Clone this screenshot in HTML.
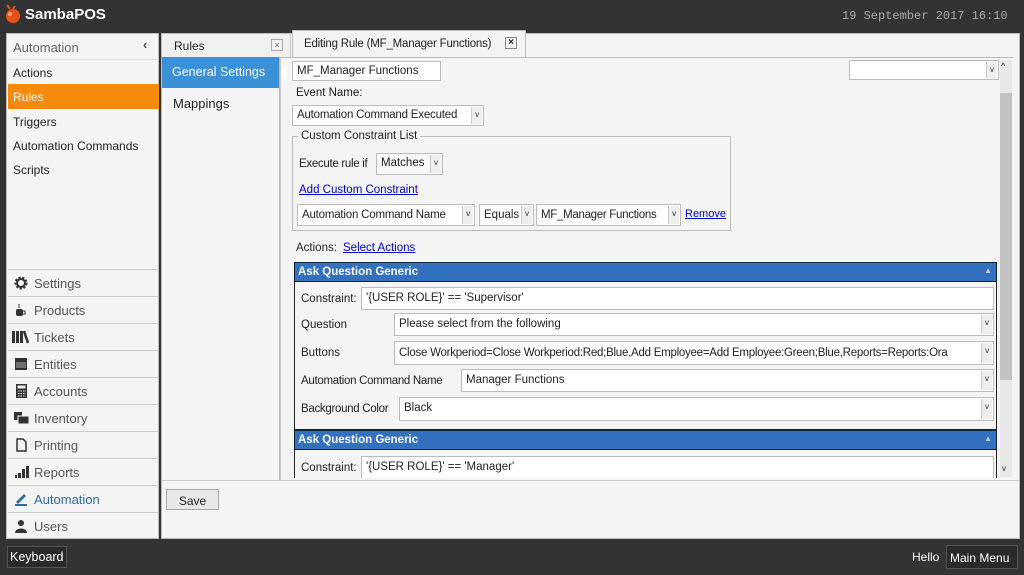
<!DOCTYPE html>
<html><head><style>
*{box-sizing:border-box;margin:0;padding:0}
body{width:1024px;height:575px;background:#333;font-family:"Liberation Sans",sans-serif;font-size:12px;color:#222;position:relative;overflow:hidden}
.a{position:absolute;white-space:nowrap}
.lp{left:6px;top:33px;width:153px;height:506px;background:#f4f4f4;border:1px solid #bbb}
.li{position:absolute;left:6px;font-size:12px;color:#222}
.bi{position:absolute;left:1px;width:151px;height:27px;border-top:1px solid #ccc;font-size:13px;color:#555;padding:6px 0 0 26px}
.bi svg{position:absolute;left:6px;top:6px}
.mid{left:161px;top:33px;width:859px;height:506px;background:#f4f4f4;border:1px solid #bbb}
.inp{position:absolute;background:#fff;border:1px solid #bbb;font-size:11.5px;padding:3px 4px;white-space:nowrap;overflow:hidden}
.dd{position:absolute;right:1px;top:1px;bottom:1px;width:11px;background:#eee;border-left:1px solid #ccc;font-size:8px;text-align:center;line-height:16px;color:#333}
.lk{color:#00c;text-decoration:underline;position:absolute;white-space:nowrap;font-size:11.5px}
.hdr{position:absolute;left:294px;width:703px;height:20px;background:#3470c0;border:1px solid #123;color:#fff;font-weight:bold;font-size:11.5px;padding:3px 3px}
.lbl{position:absolute;font-size:11.5px;white-space:nowrap}
</style></head><body>
<svg class="a" style="left:4px;top:4px" width="18" height="20"><circle cx="9" cy="12" r="7" fill="#e8501a"/><path d="M6 5 L3 1 M9 5 L11 2" stroke="#e8501a" stroke-width="2"/><circle cx="6" cy="10" r="2" fill="#f8a070"/></svg>
<div class="a" style="left:25px;top:6px;color:#fff;font-weight:bold;font-size:15px">SambaPOS</div>
<div class="a" style="left:842px;top:9px;color:#aaa;font-family:'Liberation Mono',monospace;font-size:12px">19 September 2017 16:10</div>
<div class="a lp">
<div class="li" style="top:6px;font-size:13px;color:#666">Automation</div>
<div class="a" style="left:136px;top:3px;font-size:13px;font-weight:bold;color:#444">‹</div>
<div class="a" style="left:1px;top:25px;width:151px;border-top:1px solid #ddd"></div>
<div class="li" style="top:32px">Actions</div>
<div class="a" style="left:1px;top:50px;width:151px;height:25px;background:#f58a0c;color:#fff;padding:6px 5px">Rules</div>
<div class="li" style="top:81px">Triggers</div>
<div class="li" style="top:105px">Automation Commands</div>
<div class="li" style="top:129px">Scripts</div>
<div class="bi" style="top:235px"><svg width="14" height="14"><circle cx="7" cy="7" r="5" fill="none" stroke="#333" stroke-width="3" stroke-dasharray="2 1.5"/><circle cx="7" cy="7" r="4" fill="none" stroke="#333" stroke-width="2"/></svg>Settings</div>
<div class="bi" style="top:262px"><svg width="14" height="14"><rect x="2" y="6" width="7" height="7" rx="2" fill="#333"/><path d="M9 8h2v3H9" stroke="#333" fill="none"/><path d="M5 1v4" stroke="#333"/></svg>Products</div>
<div class="bi" style="top:289px"><svg width="18" height="14" style="left:3px"><rect x="1" y="1" width="3" height="12" fill="#333"/><rect x="5" y="1" width="3" height="12" fill="#333"/><rect x="9" y="1" width="3" height="12" fill="#333"/><path d="M13 1l4 12" stroke="#333" stroke-width="2.5"/></svg>Tickets</div>
<div class="bi" style="top:316px"><svg width="14" height="14"><rect x="1" y="1" width="12" height="12" fill="#333"/><rect x="2.5" y="5" width="9" height="6" fill="#aaa"/><path d="M4 5v6M6 5v6M8 5v6M10 5v6" stroke="#333"/></svg>Entities</div>
<div class="bi" style="top:343px"><svg width="14" height="14"><rect x="2" y="0" width="11" height="14" fill="#333"/><rect x="3.5" y="1.5" width="8" height="3" fill="#eee"/><path d="M4 7h8M4 9.5h8M4 12h8" stroke="#eee" stroke-dasharray="1.5 1"/></svg>Accounts</div>
<div class="bi" style="top:370px"><svg width="16" height="14"><rect x="0" y="1" width="8" height="8" fill="#333"/><rect x="4" y="5" width="11" height="8" fill="#333" stroke="#f4f4f4"/></svg>Inventory</div>
<div class="bi" style="top:397px"><svg width="14" height="14"><path d="M3 1h6l3 3v9H3z" fill="none" stroke="#333" stroke-width="1.5"/></svg>Printing</div>
<div class="bi" style="top:424px"><svg width="16" height="14"><rect x="1" y="10" width="2" height="3" fill="#333"/><rect x="4" y="8" width="3" height="5" fill="#333"/><rect x="8" y="4" width="3" height="9" fill="#333"/><rect x="12" y="1" width="3" height="12" fill="#333"/></svg>Reports</div>
<div class="bi" style="top:451px;color:#2f6aaa"><svg width="14" height="14"><path d="M2 10L10 2l2 2-8 8z" fill="#2f6aaa"/><path d="M1 13h12" stroke="#2f6aaa" stroke-width="2"/></svg>Automation</div>
<div class="bi" style="top:478px"><svg width="14" height="14"><circle cx="7" cy="4" r="3" fill="#333"/><path d="M1 14c0-6 12-6 12 0z" fill="#333"/></svg>Users</div>
</div>
<div class="a mid">
<div class="a" style="left:0;top:0;width:129px;height:24px;background:#f0f0f0;border-right:1px solid #ccc;border-bottom:1px solid #ccc;padding:5px 12px;font-size:12px">Rules</div>
<div class="a" style="left:109px;top:5px;width:12px;height:12px;border:1px solid #aaa;font-size:9px;text-align:center;line-height:10px;color:#666">×</div>
<div class="a" style="left:0;top:23px;width:118px;height:31px;background:#3b90d6;color:#fff;font-size:12.5px;padding:8px 10px">General Settings</div>
<div class="a" style="left:109px;top:31px;width:0;height:0;border:8px solid transparent;border-right-color:#fff"></div>
<div class="a" style="left:11px;top:62px;font-size:13px">Mappings</div>
<div class="a" style="left:118px;top:23px;width:1px;height:423px;background:#ccc"></div>
<div class="a" style="left:0;top:446px;width:857px;border-top:1px solid #ccc"></div>
<div class="a" style="left:4px;top:455px;width:53px;height:21px;background:#e8e8e8;border:1px solid #aaa;text-align:center;padding-top:4px">Save</div>
</div>
<div class="a" style="left:292px;top:30px;width:234px;height:28px;background:#f4f4f4;border:1px solid #bbb;border-bottom:none;padding:7px 11px;font-size:11.5px;letter-spacing:-0.2px">Editing Rule (MF_Manager Functions)</div>
<div class="a" style="left:505px;top:37px;width:12px;height:12px;border:1px solid #888;font-size:10px;text-align:center;line-height:10px;font-weight:bold;background:#f4f4f4">×</div>
<div class="a" style="left:280px;top:57px;width:733px;border-top:1px solid #bbb"></div>
<div class="a" style="left:279px;top:57px;height:423px;border-left:1px solid #bbb"></div>
<div class="a" style="left:1000px;top:60px;width:12px;height:417px;background:#e8e8e8"></div>
<div class="a" style="left:1000px;top:93px;width:12px;height:287px;background:#c2c2c2"></div>
<div class="a" style="left:1001px;top:61px;font-size:9px">^</div>
<div class="a" style="left:1002px;top:464px;font-size:8px">v</div>
<div class="inp" style="left:292px;top:61px;width:149px;height:20px">MF_Manager Functions</div>
<div class="inp" style="left:849px;top:60px;width:150px;height:20px"><div class="dd">v</div></div>
<div class="lbl" style="left:296px;top:87px">Event Name:</div>
<div class="inp" style="left:292px;top:105px;width:192px;height:21px;padding-right:14px;letter-spacing:-0.2px">Automation Command Executed<div class="dd">v</div></div>
<div class="a" style="left:292px;top:136px;width:439px;height:95px;border:1px solid #bbb"></div>
<div class="lbl" style="left:298px;top:130px;background:#f4f4f4;padding:0 3px">Custom Constraint List</div>
<div class="lbl" style="left:299px;top:158px;letter-spacing:-0.3px">Execute rule if</div>
<div class="inp" style="left:376px;top:153px;width:67px;height:22px;background:#f8f8f8">Matches<div class="dd">v</div></div>
<div class="lk" style="left:299px;top:184px">Add Custom Constraint</div>
<div class="inp" style="left:297px;top:204px;width:178px;height:22px;padding-top:4px;letter-spacing:-0.2px">Automation Command Name<div class="dd">v</div></div>
<div class="inp" style="left:479px;top:204px;width:55px;height:22px;padding-top:4px">Equals<div class="dd">v</div></div>
<div class="inp" style="left:536px;top:204px;width:145px;height:22px;padding-top:4px;letter-spacing:-0.3px">MF_Manager Functions<div class="dd">v</div></div>
<div class="lk" style="left:685px;top:208px;font-size:11px">Remove</div>
<div class="lbl" style="left:296px;top:242px">Actions:</div>
<div class="lk" style="left:343px;top:242px">Select Actions</div>
<div class="a" style="left:294px;top:262px;width:703px;height:168px;border:1px solid #222;background:#f4f4f4"></div>
<div class="hdr" style="top:262px">Ask Question Generic<span style="position:absolute;right:4px;top:3px;font-size:8px;color:#ccc">▲</span></div>
<div class="lbl" style="left:301px;top:293px">Constraint:</div>
<div class="inp" style="left:361px;top:287px;width:633px;height:23px;padding-top:4px">'{USER ROLE}' == 'Supervisor'</div>
<div class="lbl" style="left:301px;top:319px">Question</div>
<div class="inp" style="left:394px;top:313px;width:600px;height:23px;padding-top:4px">Please select from the following<div class="dd">v</div></div>
<div class="lbl" style="left:301px;top:347px">Buttons</div>
<div class="inp" style="left:394px;top:341px;width:600px;height:24px;padding:5px 14px 0 4px;letter-spacing:-0.25px">Close Workperiod=Close Workperiod:Red;Blue,Add Employee=Add Employee:Green;Blue,Reports=Reports:Ora<div class="dd">v</div></div>
<div class="lbl" style="left:301px;top:375px;letter-spacing:-0.3px">Automation Command Name</div>
<div class="inp" style="left:461px;top:369px;width:533px;height:23px;padding-top:4px">Manager Functions<div class="dd">v</div></div>
<div class="lbl" style="left:301px;top:403px;letter-spacing:-0.3px">Background Color</div>
<div class="inp" style="left:399px;top:397px;width:595px;height:24px;padding-top:4px">Black<div class="dd">v</div></div>
<div class="a" style="left:294px;top:430px;width:703px;height:48px;border:1px solid #222;border-bottom:none;background:#f4f4f4"></div>
<div class="hdr" style="top:430px">Ask Question Generic<span style="position:absolute;right:4px;top:3px;font-size:8px;color:#ccc">▲</span></div>
<div class="lbl" style="left:301px;top:462px">Constraint:</div>
<div class="inp" style="left:361px;top:456px;width:633px;height:22px;padding-top:4px;border-bottom:none">'{USER ROLE}' == 'Manager'</div>
<div class="a" style="left:7px;top:546px;width:60px;height:22px;border:1px solid #555;background:#2a2a2a;color:#fff;font-size:12.5px;padding:3px 2px">Keyboard</div>
<div class="a" style="left:912px;top:550px;color:#fff;font-size:12px">Hello</div>
<div class="a" style="left:946px;top:545px;width:72px;height:24px;border:1px solid #555;background:#2a2a2a;color:#fff;font-size:12px;padding:5px 3px">Main Menu</div>
</body></html>
